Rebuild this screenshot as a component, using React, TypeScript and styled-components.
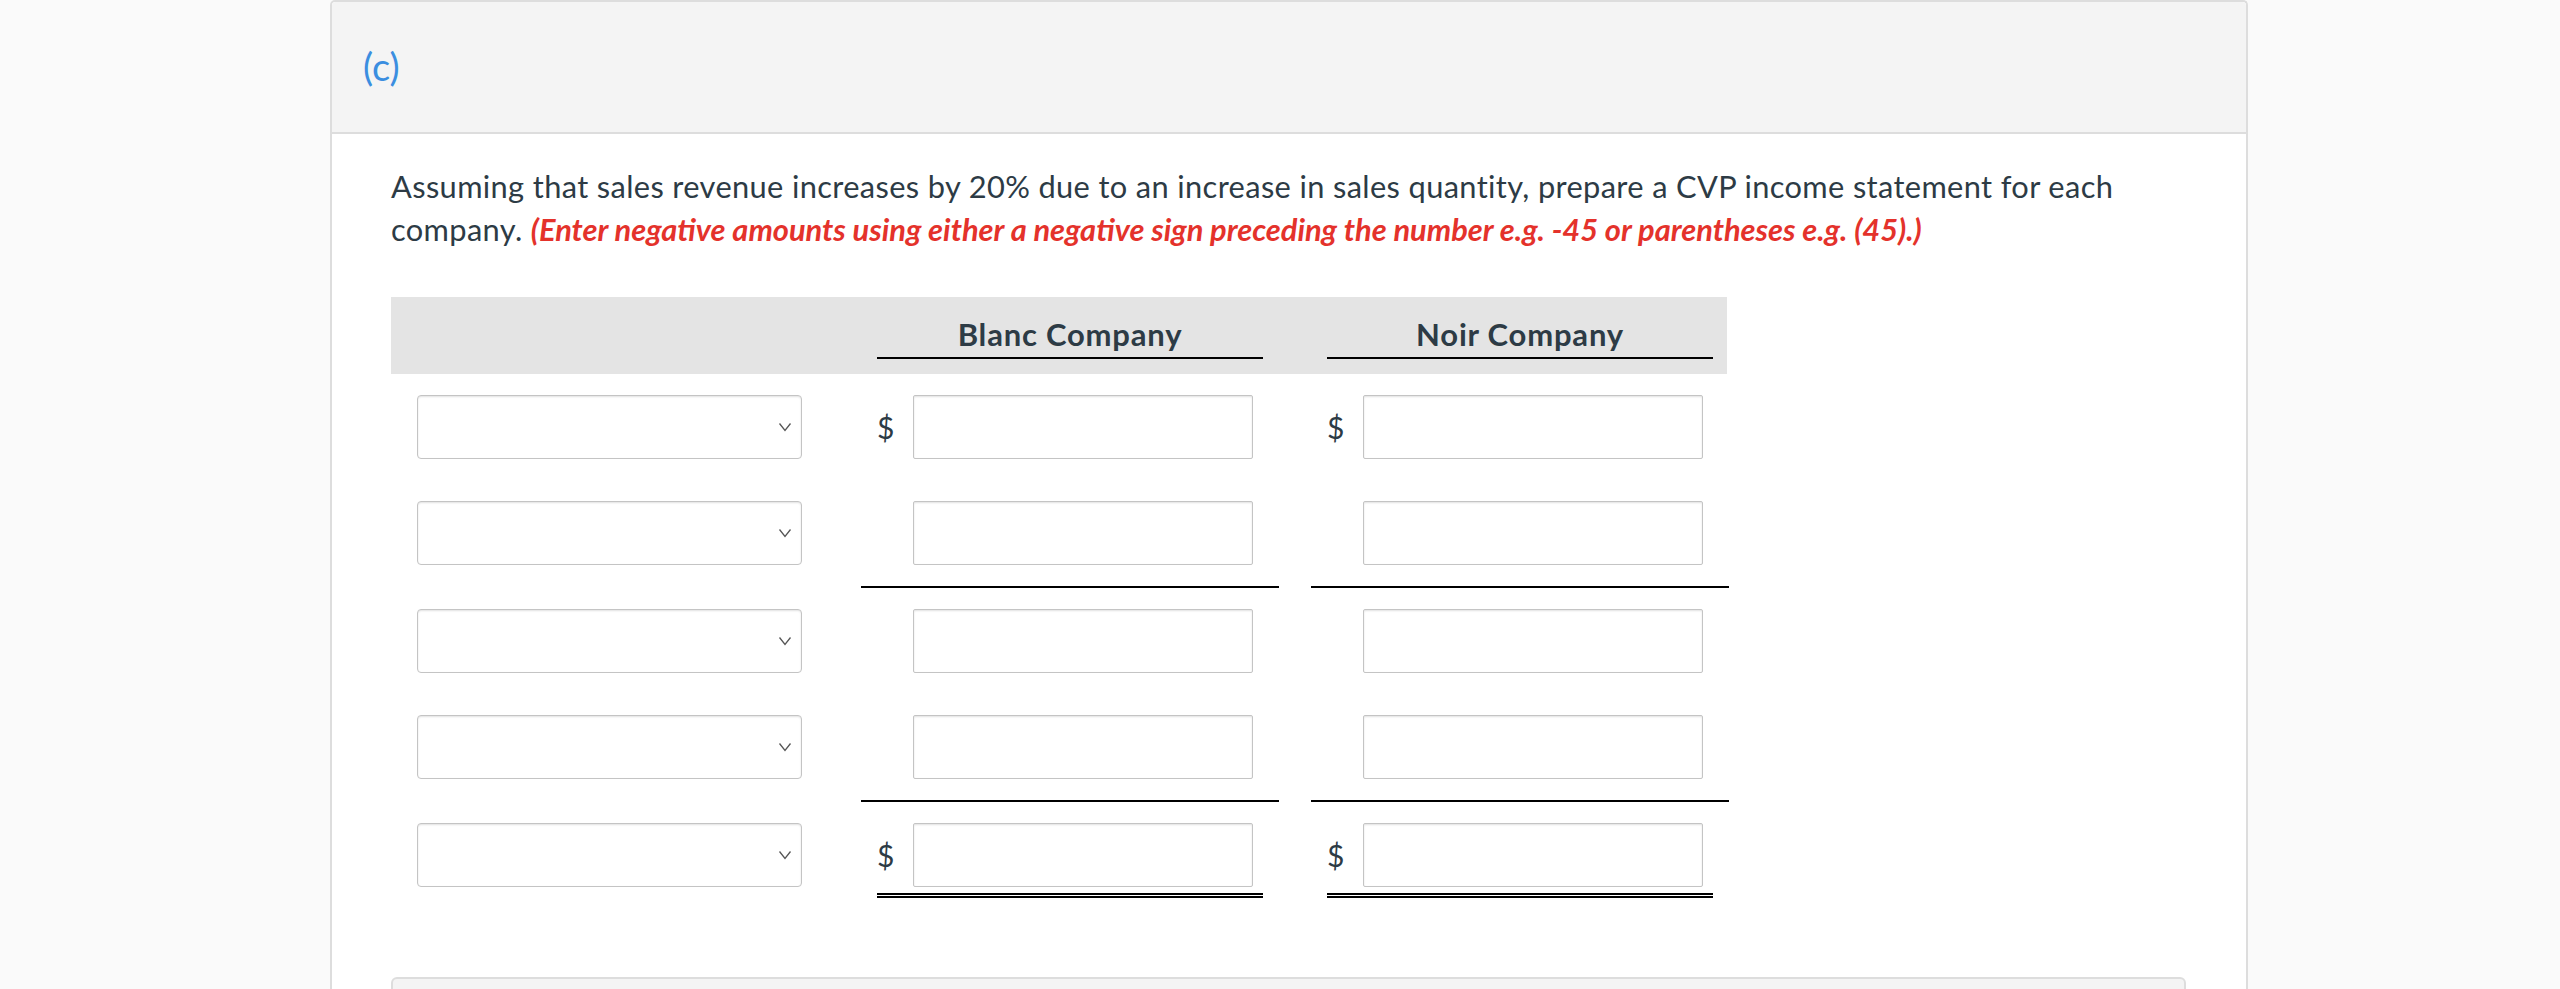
import React from "react";
import styled, { createGlobalStyle } from "styled-components";

const GlobalStyle = createGlobalStyle`
  html, body {
    margin: 0;
    padding: 0;
    background: #fafafa;
    font-family: Lato, "Open Sans", "Liberation Sans", sans-serif;
    color: #2d3b45;
  }
  * { box-sizing: border-box; }
`;

const Page = styled.div`
  padding-left: 330px;
`;

const Card = styled.section`
  width: 1918px;
  background: #ffffff;
  border: 2px solid #dddddd;
  border-bottom: none;
  border-radius: 5px 5px 0 0;
`;

const CardHeader = styled.header`
  height: 130px;
  display: flex;
  align-items: center;
  padding-left: 31px;
  background: #f4f4f4;
  border-bottom: 2px solid #dddddd;
  border-radius: 4px 4px 0 0;
  box-sizing: content-box;
`;

const PartLabel = styled.span`
  font-size: 38px;
  line-height: 1.2;
  color: #3b8ee0;
`;

const CardBody = styled.div`
  padding: 31px 60px 0 59px;
`;

const Prompt = styled.p`
  margin: 0;
  font-size: 30.8px;
  line-height: 43px;
  letter-spacing: 0.36px;
  color: #2d3b45;
`;

const Hint = styled.em`
  font-weight: 700;
  font-style: italic;
  letter-spacing: 0;
  color: #e4322b;
`;

const Statement = styled.div`
  margin-top: 46px;
  width: 1336px;
`;

const gridCols = `486px 386px 64px 386px 14px`;

const HeadRow = styled.div`
  display: grid;
  grid-template-columns: ${gridCols};
  align-items: end;
  height: 77px;
  padding-bottom: 15px;
  background: #e4e4e4;
`;

const ColHead = styled.div<{ $col: number }>`
  grid-column: ${(p) => p.$col};
  font-size: 31px;
  line-height: 36px;
  font-weight: 700;
  letter-spacing: 0.8px;
  text-align: center;
  padding-bottom: 5px;
  border-bottom: 2px solid #000;
  color: #2d3b45;
`;

const Row = styled.div<{ $last?: boolean }>`
  display: grid;
  grid-template-columns: ${gridCols};
  align-items: start;
  padding: 21px 0 ${(p) => (p.$last ? "0" : "21px")};
`;

const SelectBox = styled.div`
  grid-column: 1;
  margin-left: 26px;
  width: 385px;
  height: 64px;
  display: flex;
  align-items: center;
  justify-content: flex-end;
  padding-right: 9px;
  background: #fff;
  border: 1px solid #c4c4c4;
  border-radius: 4px;
  box-shadow: inset 0 1px 2px rgba(0, 0, 0, 0.12);
  cursor: pointer;
`;

const AmountCell = styled.div<{ $col: number; $total?: boolean }>`
  grid-column: ${(p) => p.$col};
  display: flex;
  align-items: center;
  padding-bottom: ${(p) => (p.$total ? "6px" : "0")};
  border-bottom: ${(p) => (p.$total ? "5px double #000" : "none")};
`;

const Dollar = styled.span<{ $show: boolean }>`
  width: 36px;
  font-size: 30px;
  line-height: 36px;
  color: #2d3b45;
  visibility: ${(p) => (p.$show ? "visible" : "hidden")};
`;

const AmountInput = styled.input`
  width: 340px;
  height: 64px;
  background: #fff;
  border: 1px solid #c4c4c4;
  border-radius: 2px;
  box-shadow: inset 0 1px 2px rgba(0, 0, 0, 0.12);
  font-family: inherit;
  font-size: 26px;
  padding: 0 12px;
  outline: none;
`;

const RuleRow = styled.div`
  display: grid;
  grid-template-columns: ${gridCols};
  height: 2px;
`;

const Rule = styled.div<{ $col: number }>`
  grid-column: ${(p) => p.$col};
  margin: 0 -16px;
  height: 2px;
  background: #000;
`;

const NextCard = styled.div`
  margin-top: 79px;
  height: 120px;
  background: #f4f4f4;
  border: 2px solid #dddddd;
  border-radius: 6px;
`;

const Chevron = () => (
  <svg width="14" height="10" viewBox="0 0 14 10" fill="none">
    <path d="M1.5 1.5 L7 8.5 L12.5 1.5" stroke="#555" strokeWidth="1.3" />
  </svg>
);

type LineProps = { dollar?: boolean; last?: boolean };

const Line = ({ dollar = false, last = false }: LineProps) => (
  <Row $last={last}>
    <SelectBox role="combobox">
      <Chevron />
    </SelectBox>
    <AmountCell $col={2} $total={last}>
      <Dollar $show={dollar}>$</Dollar>
      <AmountInput type="text" />
    </AmountCell>
    <AmountCell $col={4} $total={last}>
      <Dollar $show={dollar}>$</Dollar>
      <AmountInput type="text" />
    </AmountCell>
  </Row>
);

const Rules = () => (
  <RuleRow>
    <Rule $col={2} />
    <Rule $col={4} />
  </RuleRow>
);

export default function App() {
  return (
    <>
      <GlobalStyle />
      <Page>
        <Card>
          <CardHeader>
            <PartLabel>(c)</PartLabel>
          </CardHeader>
          <CardBody>
            <Prompt>
              Assuming that sales revenue increases by 20% due to an increase in sales quantity, prepare a CVP income
              statement for each company.{" "}
              <Hint>
                (Enter negative amounts using either a negative sign preceding the number e.g. -45 or parentheses e.g.
                (45).)
              </Hint>
            </Prompt>
            <Statement>
              <HeadRow>
                <ColHead $col={2}>Blanc Company</ColHead>
                <ColHead $col={4}>Noir Company</ColHead>
              </HeadRow>
              <Line dollar />
              <Line />
              <Rules />
              <Line />
              <Line />
              <Rules />
              <Line dollar last />
            </Statement>
            <NextCard />
          </CardBody>
        </Card>
      </Page>
    </>
  );
}
